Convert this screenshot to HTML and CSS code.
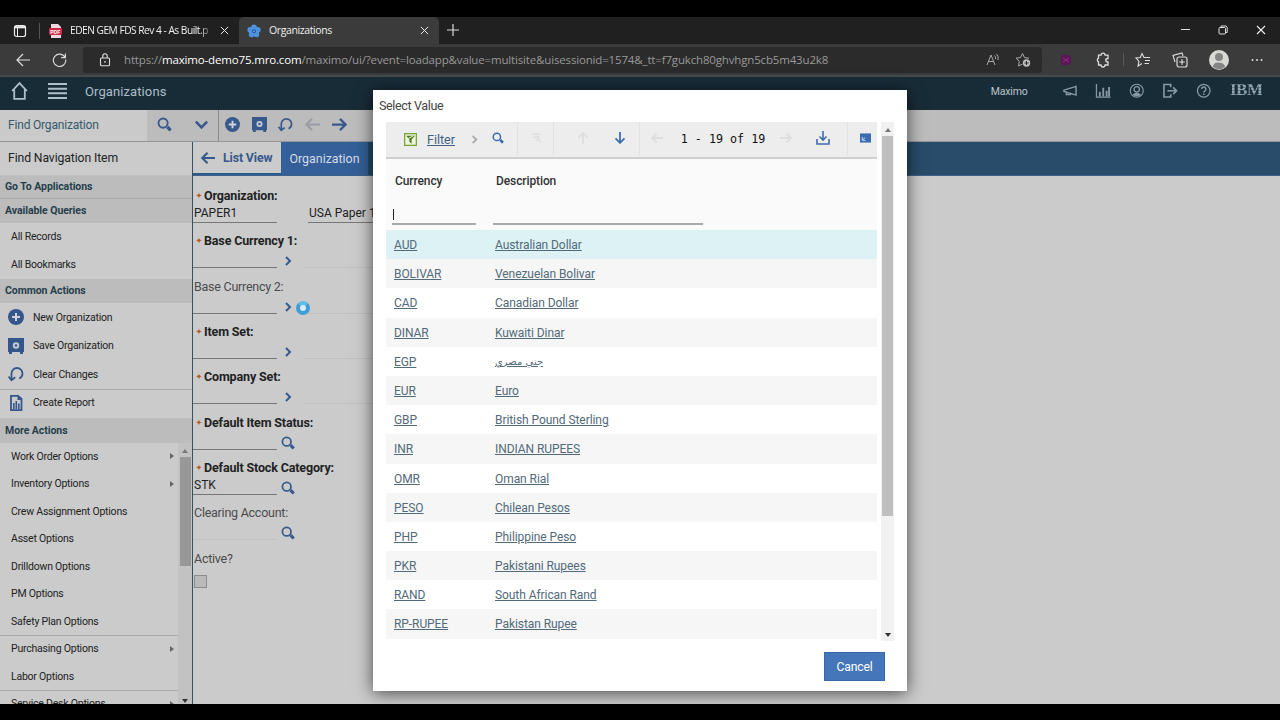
FILE: index.html
```
<!DOCTYPE html>
<html lang="en">
    <head>
        <meta charset="UTF-8">
        <title>Organizations</title>
        <link rel="stylesheet" href="styles.css">
    </head>
    <body>
        <!-- icons -->
        <svg class="sprite">
            <symbol id="search" viewBox="0 0 16 16"><circle cx="6.5" cy="6.5" r="4.9" fill="none" stroke="currentColor" stroke-width="2"/><path d="M11 10.500l3.500 3.800" stroke="currentColor" stroke-width="3.600"/></symbol>
            <symbol id="down" viewBox="0 0 16 16"><path d="M2 5l6 6 6-6" fill="none" stroke="currentColor" stroke-width="2.8"/></symbol>
            <symbol id="chev" viewBox="0 0 10 10"><path d="M3 1l4 4-4 4" fill="none" stroke="currentColor" stroke-width="2"/></symbol>
            <symbol id="plus" viewBox="0 0 16 16"><circle cx="8" cy="8" r="8" fill="currentColor"/><path d="M8 4v8M4 8h8" stroke="#d0d4da" stroke-width="2"/></symbol>
            <symbol id="save" viewBox="0 0 16 16"><path d="M0 0h16v14h-1v2h-3v-2H4v2H1v-2H0z" fill="currentColor"/><circle cx="8" cy="7.5" r="3.2" fill="#c8ccd2"/><circle cx="8" cy="7.5" r="1.3" fill="currentColor"/></symbol>
            <symbol id="undo" viewBox="0 0 16 16"><path d="M3.500 14V7.500a5.500 5.500 0 0 1 11 0c0 2.500-1.200 4-3.200 5M.5 10.500l3 3.800 3.700-3" fill="none" stroke="currentColor" stroke-width="1.800"/></symbol>
            <symbol id="right" viewBox="0 0 16 16"><path d="M0 8h14M8.500 2l6 6-6 6" fill="none" stroke="currentColor" stroke-width="2.400"/></symbol>
            <symbol id="left" viewBox="0 0 16 16"><path d="M16 8H2M7.500 2l-6 6 6 6" fill="none" stroke="currentColor" stroke-width="2.400"/></symbol>
            <symbol id="report" viewBox="0 0 16 16"><path d="M3 .8h7L13.500 4v11.200H3z" fill="none" stroke="currentColor" stroke-width="1.800"/><path d="M9.500 1v4h4" fill="currentColor"/><path d="M5.800 14V8M8.300 14V6M10.800 14V8.500" stroke="currentColor" stroke-width="1.600"/></symbol>
            <symbol id="close" viewBox="0 0 10 10"><path d="M1 1l8 8M9 1L1 9" stroke="currentColor" stroke-width="1.100"/></symbol>
        </svg>
        <div class="screen">
            <!-- browser tabs -->
            <div class="tabs">
                <svg class="panel_icon" viewBox="0 0 14 14"><rect x="1.500" y="1.500" width="11" height="11" rx="2" fill="none" stroke="#eee" stroke-width="1.200"/><path d="M1.500 3.200h11" stroke="#eee" stroke-width="2.200"/><path d="M4.500 3v9.500" stroke="#eee"/></svg>
                <div class="tab tab_pdf">
                    <svg width="13" height="14" viewBox="0 0 13 14"><path d="M2 0h7l3 3v11H2z" fill="#ecdcdf"/><rect y="4" width="13" height="7" rx="1" fill="#d02845"/><text x="1.200" y="9.600" class="pdf">PDF</text></svg>
                    <span class="tab_name fade">EDEN GEM FDS Rev 4 - As Built.p</span>
                    <svg class="x"><use href="#close"/></svg>
                </div>
                <div class="tab active">
                    <svg width="14" height="14" viewBox="0 0 14 14"><g fill="#4d92e0"><circle cx="7" cy="3.200" r="2.800"/><circle cx="10.800" cy="5.900" r="2.800"/><circle cx="9.400" cy="10.400" r="2.800"/><circle cx="4.600" cy="10.400" r="2.800"/><circle cx="3.200" cy="5.900" r="2.800"/></g><circle cx="7" cy="7.200" r="2" fill="#225b9f"/><circle cx="7" cy="7.200" r=".8" fill="#8fc0f4"/></svg>
                    <span class="tab_name">Organizations</span>
                    <svg class="x"><use href="#close"/></svg>
                </div>
                <svg class="new_tab" viewBox="0 0 12 12"><path d="M6 0v12M0 6h12" stroke="#ddd" stroke-width="1.200"/></svg>
                <div class="window_btns">
                    <svg viewBox="0 0 10 10"><path d="M1 4.500h9" stroke="#ddd"/></svg>
                    <svg viewBox="0 0 10 10"><rect x="1" y="2.500" width="6.500" height="6.500" rx="1" fill="none" stroke="#ddd"/><path d="M3 2.500V1h5l1.200 1.200V7.500H8" fill="none" stroke="#ddd"/></svg>
                    <svg><use href="#close"/></svg>
                </div>
            </div>
            <!-- address bar -->
            <div class="address">
                <svg class="back" viewBox="0 0 14 14"><path d="M14 7H1M7 1L1 7l6 6" fill="none" stroke="#ddd" stroke-width="1.200"/></svg>
                <svg class="reload" viewBox="0 0 16 16"><path d="M14 6A6.600 6.600 0 1 0 14.600 8M14.300 1.500V6H9.800" fill="none" stroke="#ddd" stroke-width="1.200"/></svg>
                <div class="url">
                    <svg class="lock" viewBox="0 0 12 14"><rect x="1.500" y="5" width="9" height="7.800" rx="1" fill="none" stroke="#ddd" stroke-width="1.100"/><path d="M3.800 5V3a2.200 2.200 0 0 1 4.400 0v2" fill="none" stroke="#ddd" stroke-width="1.100"/><circle cx="6" cy="8.800" r=".9" fill="#ddd"/></svg>
                    <span class="link">https://<b>maximo-demo75.mro.com</b>/maximo/ui/?event=loadapp&amp;value=multisite&amp;uisessionid=1574&amp;_tt=f7gukch80ghvhgn5cb5m43u2k8</span>
                    <svg class="aloud" viewBox="0 0 14 14"><path d="M1 12L5 2l4 10M2.500 8.500h5M8.500 2.500q1.500 1.500 1 3.500M10.500 1q2.500 2.500 1.500 6" fill="none" stroke="#aaa"/></svg>
                    <svg class="fav" viewBox="0 0 16 16"><path d="M7.500 12L3.500 14l.8-4.700L1 6.200l4.500-.6L7.500 1.500l2 4.100 4.500.6" fill="none" stroke="#aaa"/><circle cx="11.500" cy="11" r="3.700" fill="#bbb"/><path d="M11.500 9v4M9.500 11h4" stroke="#2b2b2b"/></svg>
                </div>
                <div class="ext">
                    <svg viewBox="0 0 16 16"><rect x="3" y="3" width="10" height="10" rx="3" fill="#5b1755"/><path d="M5 6l3 2-3 2M11 6L8 8l3 2" fill="none" stroke="#91288a"/></svg>
                    <svg viewBox="0 0 16 16"><path d="M3.500 3.200H6a2 2 0 0 1 4 0h3v3.300c-3 0-3 3.300 0 3.300V13h-3a2 2 0 0 1-4 0H3.500V9.800a1.800 1.800 0 0 1 0-3.400z" fill="none" stroke="#ddd" stroke-width="1.300"/></svg>
                    <i></i>
                    <svg viewBox="0 0 16 16"><path d="M7 11.500L3 14l1-4.700L1 6l4.300-.5L7 1.500l2 4h6M10 8.500h5M9.500 11.500H14" fill="none" stroke="#ddd" stroke-width="1.100"/></svg>
                    <svg viewBox="0 0 16 16"><path d="M3 10L1 3.500 10 1l1 3" fill="none" stroke="#ddd" stroke-width="1.100"/><rect x="5" y="5" width="10" height="10" rx="2" fill="none" stroke="#ddd" stroke-width="1.200"/><path d="M10 7.200v5.600M7.200 10h5.600" stroke="#ddd" stroke-width="1.200"/></svg>
                    <svg class="avatar" viewBox="0 0 20 20"><circle cx="10" cy="10" r="10" fill="#d8d8d4"/><circle cx="10" cy="7" r="4" fill="#858585"/><path d="M4 17q0-5 6-4.500T16 17q-6 4.500-12 0" fill="#858585"/></svg>
                    <svg viewBox="0 0 16 16"><g fill="#ddd"><circle cx="3.500" cy="8" r="1"/><circle cx="8" cy="8" r="1"/><circle cx="12.500" cy="8" r="1"/></g></svg>
                </div>
            </div>
            <!-- Maximo header -->
            <div class="header">
                <svg class="home" viewBox="0 0 16 17"><path d="M1 8.500L8 1l7 7.500M3 7v9h10V7" fill="none" stroke="#aebfc9" stroke-width="1.700"/></svg>
                <svg class="burger" viewBox="0 0 19 16"><path d="M0 1h19M0 5.700h19M0 10.300h19M0 15h19" stroke="#aebfc9" stroke-width="2"/></svg>
                <span class="app">Organizations</span>
                <span class="user">Maximo</span>
                <div class="header_icons">
                    <svg viewBox="0 0 16 16"><path d="M2 7.300L14.500 3.500v9L2 8.700zM4.500 9.500v2.500h4v-1.500" fill="none" stroke="#8799a3" stroke-width="1.500"/></svg>
                    <svg viewBox="0 0 16 16"><path d="M1.500 1v13.500H16" fill="none" stroke="#8799a3" stroke-width="1.300"/><path d="M5 14V9M8.500 14V5M12 14V8M14.500 14V4" stroke="#8799a3" stroke-width="1.900"/></svg>
                    <svg viewBox="0 0 16 16"><circle cx="8" cy="8" r="6.700" fill="none" stroke="#8799a3" stroke-width="1.200"/><circle cx="8" cy="6.500" r="2.800" fill="none" stroke="#8799a3" stroke-width="1.300"/><path d="M3.500 12q4.500-4 9 0Q8 16 3.500 12" fill="#8799a3"/></svg>
                    <svg viewBox="0 0 16 16"><path d="M9 4.500V1.500H2v13h7v-3M5.500 8H15M11.500 4.500L15 8l-3.500 3.500" fill="none" stroke="#8799a3" stroke-width="1.700"/></svg>
                    <svg viewBox="0 0 16 16"><circle cx="8" cy="8" r="6.500" fill="none" stroke="#8799a3" stroke-width="1.300"/><path d="M5.800 6.300a2.200 2.200 0 1 1 3.200 2q-1 .6-1 1.500M8 10.800v1.600" fill="none" stroke="#8799a3" stroke-width="1.500"/></svg>
                </div>
                <span class="ibm">IBM</span>
            </div>
            <!-- app toolbar -->
            <div class="toolbar">
                <div class="find">Find Organization</div>
                <div class="find_btns"><svg><use href="#search"/></svg><svg><use href="#down"/></svg></div>
                <div class="actions">
                    <svg><use href="#plus"/></svg><svg><use href="#save"/></svg><svg><use href="#undo"/></svg><svg class="off"><use href="#left"/></svg><svg><use href="#right"/></svg>
                </div>
            </div>
            <div class="content">
                <div class="nav">
                    <div class="find_nav">Find Navigation Item</div>
                    <div class="head goto">Go To Applications</div>
                    <div class="head avail">Available Queries</div>
                    <div class="item">All Records</div>
                    <div class="item">All Bookmarks</div>
                    <div class="head common">Common Actions</div>
                    <div class="act"><svg><use href="#plus"/></svg>New Organization</div>
                    <div class="act"><svg><use href="#save"/></svg>Save Organization</div>
                    <div class="act"><svg><use href="#undo"/></svg>Clear Changes</div>
                    <div class="act report"><svg><use href="#report"/></svg>Create Report</div>
                    <div class="head more">More Actions</div>
                    <div class="more_box">
                        <div class="more_list">
                            <div class="item sub">Work Order Options</div>
                            <div class="item sub">Inventory Options</div>
                            <div class="item">Crew Assignment Options</div>
                            <div class="item">Asset Options</div>
                            <div class="item">Drilldown Options</div>
                            <div class="item">PM Options</div>
                            <div class="item">Safety Plan Options</div>
                            <div class="item sub line">Purchasing Options</div>
                            <div class="item">Labor Options</div>
                            <div class="item sub line">Service Desk Options</div>
                        </div>
                        <div class="scroll nav_scroll"><i class="up"></i><div class="thumb"></div><i class="dn"></i></div>
                    </div>
                </div>
                <div class="main">
                    <div class="main_tabs">
                        <div class="list_view"><svg><use href="#left"/></svg>List View</div>
                        <div class="org_tab">Organization</div>
                    </div>
                    <div class="form">
                        <div class="field"><label class="req">Organization:</label><div class="row"><span class="val">PAPER1</span><span class="val desc">USA Paper 1</span></div></div>
                        <div class="field"><label class="req">Base Currency 1:</label><div class="row"><span class="val"></span><svg class="go"><use href="#chev"/></svg><span class="faint"></span></div></div>
                        <div class="field"><label>Base Currency 2:</label><div class="row"><span class="val"></span><svg class="go"><use href="#chev"/></svg><span class="faint"></span><span class="busy"></span></div></div>
                        <div class="field"><label class="req">Item Set:</label><div class="row"><span class="val"></span><svg class="go"><use href="#chev"/></svg><span class="faint"></span></div></div>
                        <div class="field"><label class="req">Company Set:</label><div class="row"><span class="val"></span><svg class="go"><use href="#chev"/></svg><span class="faint"></span></div></div>
                        <div class="field"><label class="req">Default Item Status:</label><div class="row"><span class="val"></span><svg class="look"><use href="#search"/></svg></div></div>
                        <div class="field"><label class="req">Default Stock Category:</label><div class="row"><span class="val">STK</span><svg class="look"><use href="#search"/></svg></div></div>
                        <div class="field"><label>Clearing Account:</label><div class="row"><span class="val none"></span><svg class="look"><use href="#search"/></svg></div></div>
                        <div class="field"><label>Active?</label><div class="check"></div></div>
                    </div>
                </div>
            </div>
            <!-- select value dialog -->
            <div class="dialog">
                <div class="dialog_title">Select Value</div>
                <div class="dialog_body">
                    <div class="table">
                        <div class="table_bar">
                            <svg class="funnel" viewBox="0 0 12 12"><rect x=".6" y=".6" width="10.800" height="10.800" fill="#eef5dc" stroke="#7ba33c" stroke-width="1.200"/><path d="M2 2.500h8L7 6v4L5 8V6z" fill="#4c7a1c"/><path d="M4 5l4-2" stroke="#dbe9bd"/></svg>
                            <a class="filter">Filter</a>
                            <svg class="next"><use href="#chev"/></svg>
                            <div class="c find_c"><svg><use href="#search"/></svg></div>
                            <div class="c sep dim"><svg viewBox="0 0 16 16"><path d="M2 3h11M4 7h7M7 11h4M10 5l4 9" stroke="currentColor" stroke-width="2"/></svg></div>
                            <div class="c sep dim"><svg class="rot_up"><use href="#left"/></svg></div>
                            <div class="c down_c"><svg class="rot_down"><use href="#right"/></svg></div>
                            <div class="c sep dim"><svg><use href="#left"/></svg></div>
                            <div class="count">1 - 19 of 19</div>
                            <div class="c dim"><svg><use href="#right"/></svg></div>
                            <div class="c"><svg class="big" viewBox="0 0 14 14"><path d="M7 0v9M3.500 5.500L7 9l3.500-3.500M1 8v5h12V8" fill="none" stroke="currentColor" stroke-width="1.600"/></svg></div>
                            <div class="c sep last_c"><svg class="win" viewBox="0 0 12 10"><rect width="12" height="10" fill="#3c6cb0"/><path d="M2.500 4v3.500H6M3 7l2.500-2.500" fill="none" stroke="#d5e2f2"/></svg></div>
                        </div>
                        <div class="table_head">
                            <div class="cols names"><span>Currency</span><span>Description</span></div>
                            <div class="cols inputs"><span class="in_cur"><i class="caret"></i></span><span class="in_desc"></span></div>
                        </div>
                        <div class="cols tr picked"><a>AUD</a><a>Australian Dollar</a></div>
                        <div class="cols tr"><a>BOLIVAR</a><a>Venezuelan Bolivar</a></div>
                        <div class="cols tr"><a>CAD</a><a>Canadian Dollar</a></div>
                        <div class="cols tr"><a>DINAR</a><a>Kuwaiti Dinar</a></div>
                        <div class="cols tr"><a>EGP</a><a class="arabic">جني مصري</a></div>
                        <div class="cols tr"><a>EUR</a><a>Euro</a></div>
                        <div class="cols tr"><a>GBP</a><a>British Pound Sterling</a></div>
                        <div class="cols tr"><a>INR</a><a>INDIAN RUPEES</a></div>
                        <div class="cols tr"><a>OMR</a><a>Oman Rial</a></div>
                        <div class="cols tr"><a>PESO</a><a>Chilean Pesos</a></div>
                        <div class="cols tr"><a>PHP</a><a>Philippine Peso</a></div>
                        <div class="cols tr"><a>PKR</a><a>Pakistani Rupees</a></div>
                        <div class="cols tr"><a>RAND</a><a>South African Rand</a></div>
                        <div class="cols tr"><a>RP-RUPEE</a><a>Pakistan Rupee</a></div>
                    </div>
                    <div class="scroll dialog_scroll"><i class="up"></i><div class="thumb"></div><i class="dn"></i></div>
                </div>
                <div class="dialog_foot"><button class="cancel">Cancel</button></div>
            </div>
        </div>
    </body>
</html>
```
FILE: styles.css
```
*{
    box-sizing: border-box;
}
body{
    margin: 0;
    background-color: #000;
    font-family: Roboto, sans-serif;
    font-size: 12px;
    color: #222;
}
svg{
    display: block;
    flex: none;
}
.sprite{
    display: none;
}
.screen{
    position: relative;
    width: 1280px;
    height: 720px;
    padding: 17px 0 16px;
    display: flex;
    flex-direction: column;
    overflow: hidden;
    white-space: nowrap;
}
/* browser */
.tabs{
    height: 27px;
    flex: none;
    display: flex;
    align-items: center;
    background-color: #202020;
    font-family: "Open Sans", sans-serif;
    font-size: 10.5px;
    letter-spacing: -0.4px;
    color: #eee;
}
.panel_icon{
    width: 14px;
    height: 14px;
    margin: 0 12px 0 13px;
}
.tab{
    height: 27px;
    display: flex;
    align-items: center;
}
.tab_pdf{
    width: 200px;
    height: 16px;
    padding-left: 9px;
    border-left: 1px solid #555;
}
.pdf{
    font: bold 5px "Liberation Sans", sans-serif;
    letter-spacing: 0;
    fill: #fff;
}
.tab_name{
    margin-left: 8px;
    flex: 1;
    overflow: hidden;
    padding-bottom: 1px;
}
.fade{
    -webkit-mask-image: linear-gradient(90deg, #000 90%, transparent);
    mask-image: linear-gradient(90deg, #000 90%, transparent);
    margin-right: 6px;
    font-size: 10.2px;
    letter-spacing: -0.5px;
}
.x{
    width: 9px;
    height: 9px;
    margin-right: 10px;
}
.active{
    width: 200px;
    padding-left: 8px;
    background-color: #3b3b3b;
    border-radius: 5px 5px 0 0;
}
.new_tab{
    width: 12px;
    height: 12px;
    margin: 0 0 1px 8px;
}
.window_btns{
    margin: 0 14px 1px auto;
    display: flex;
    gap: 28px;
}
.window_btns svg{
    width: 10px;
    height: 10px;
}
.address{
    height: 33px;
    flex: none;
    display: flex;
    align-items: center;
    background-color: #3b3b3b;
    border-bottom: 2px solid #454a4d;
    color: #ddd;
}
.back{
    width: 14px;
    height: 14px;
    margin-left: 16px;
}
.reload{
    width: 15px;
    height: 15px;
    margin: 0 16px 0 22px;
}
.url{
    width: 959px;
    height: 26px;
    padding-left: 16px;
    display: flex;
    align-items: center;
    background-color: #2b2b2b;
    border-radius: 3px;
    font-family: "Open Sans", sans-serif;
    font-size: 11.5px;
    letter-spacing: -0.16px;
    color: #999;
}
.url b{
    font-weight: normal;
    color: #fff;
}
.lock{
    width: 12px;
    height: 14px;
    margin-right: 13px;
}
.aloud{
    width: 14px;
    height: 14px;
    margin-left: auto;
}
.fav{
    width: 16px;
    height: 16px;
    margin: 0 11px 0 15px;
}
.ext{
    flex: 1;
    display: flex;
    align-items: center;
    padding-left: 16px;
}
.ext svg{
    width: 16px;
    height: 16px;
    margin-right: 21px;
}
.ext i{
    width: 1px;
    height: 13px;
    margin: 0 11px 0 -9px;
    background-color: #5a5a5a;
}
.ext .avatar{
    width: 20px;
    height: 20px;
    margin-right: 20px;
}
.ext svg:last-child{
    margin-right: 0;
}
/* app header */
.header{
    height: 33px;
    flex: none;
    display: flex;
    align-items: center;
    padding-bottom: 5px;
    background-color: #182c38;
    color: #aebfc9;
}
.home{
    width: 17px;
    height: 18px;
    margin: 0 20px 0 11px;
}
.burger{
    width: 19px;
    height: 16px;
    margin-right: 18px;
}
.app{
    font-size: 13px;
    letter-spacing: 0.1px;
}
.user{
    margin-left: auto;
    margin-right: 34px;
    font-size: 10.5px;
    letter-spacing: -0.2px;
    color: #bcc6cc;
}
.header_icons{
    display: flex;
    gap: 18px;
}
.header_icons svg{
    width: 15.5px;
    height: 15.5px;
}
.ibm{
    width: 32px;
    margin: 0 18px 3px 19px;
    font: bold 17px/15px "Liberation Serif", serif;
    letter-spacing: -0.5px;
    color: transparent;
    background: repeating-linear-gradient(#93a5af 0 2px, #6c7f8a 2px 3px);
    -webkit-background-clip: text;
    background-clip: text;
}
/* app toolbar */
.toolbar{
    height: 32px;
    flex: none;
    display: flex;
    background-color: #bcbcbc;
    border-bottom: 1px solid #929699;
    color: #38598c;
}
.find{
    width: 147px;
    padding-left: 8px;
    line-height: 30px;
    background-color: #cacaca;
    font-size: 12px;
    letter-spacing: -0.18px;
    color: #35586b;
}
.find_btns{
    width: 72px;
    display: flex;
    align-items: center;
    gap: 22px;
    padding: 0 0 2px 10px;
    border-right: 1px solid #898d91;
}
.find_btns svg{
    width: 15px;
    height: 15px;
}
.actions{
    display: flex;
    align-items: center;
    gap: 11.7px;
    padding: 0 0 3px 6px;
}
.actions svg{
    width: 15px;
    height: 15px;
}
.off{
    color: #9b9fa4;
}
.content{
    flex: 1;
    display: flex;
    min-height: 0;
    background-color: #cbcbcb;
}
/* left navigation */
.nav{
    width: 193px;
    flex: none;
    display: flex;
    flex-direction: column;
    border-right: 1px solid #35505f;
    font-size: 10.5px;
    letter-spacing: -0.22px;
}
.find_nav{
    height: 34px;
    padding-left: 8px;
    line-height: 32px;
    font-size: 12.2px;
    letter-spacing: -0.1px;
    border-bottom: 1px solid #c0c0c0;
}
.head{
    padding-left: 5px;
    background-color: #bcbcbc;
    font-weight: bold;
    letter-spacing: -0.06px;
    color: #263f4b;
}
.goto{
    height: 23px;
    line-height: 22px;
    border-bottom: 1px solid #a9a9a9;
}
.avail{
    height: 24px;
    line-height: 23px;
}
.common{
    height: 24px;
    margin-top: 1px;
    line-height: 24px;
}
.more{
    height: 25px;
    line-height: 25px;
}
.item{
    height: 27.5px;
    padding-left: 11px;
    line-height: 27.5px;
}
.act{
    height: 28.5px;
    display: flex;
    align-items: center;
    padding-left: 8px;
    gap: 9px;
}
.act svg{
    width: 16px;
    height: 16px;
    color: #35568a;
}
.report{
    height: 29px;
    padding-bottom: 2px;
    border-top: 1px solid #aaa;
}
.more_box{
    flex: 1;
    display: flex;
    min-height: 0;
    overflow: hidden;
}
.more_list{
    flex: 1;
}
.line{
    border-top: 1px solid #aaa;
    line-height: 26px;
}
.sub{
    display: flex;
    justify-content: space-between;
    align-items: center;
    padding-right: 4px;
}
.sub::after{
    content: "";
    border-left: 4px solid #666;
    border-top: 3px solid transparent;
    border-bottom: 3px solid transparent;
}
.scroll{
    display: flex;
    flex-direction: column;
    align-items: center;
}
.scroll i{
    border-left: 3px solid transparent;
    border-right: 3px solid transparent;
}
.up{
    border-bottom: 4px solid #777;
}
.dn{
    margin-top: auto;
    border-top: 4px solid #333;
}
.nav_scroll{
    width: 14px;
    padding: 6px 0 1px;
    background-color: #c2c2c2;
}
.nav_scroll .thumb{
    width: 11px;
    height: 109px;
    margin-top: 4px;
    background-color: #989898;
}
/* form */
.main{
    flex: 1;
    min-width: 0;
}
.main_tabs{
    height: 34px;
    display: flex;
    background-color: #284c69;
    border-bottom: 1px solid #3c628c;
    font-size: 12.4px;
}
.list_view{
    width: 88px;
    display: flex;
    align-items: center;
    gap: 8px;
    padding-left: 8px;
    background-color: #cbcbcb;
    border-bottom: 2px solid #2d5b87;
    font-weight: bold;
    letter-spacing: -0.15px;
    color: #38598c;
}
.list_view svg{
    width: 14px;
    height: 14px;
}
.org_tab{
    width: 87px;
    text-align: center;
    line-height: 33px;
    background-color: #345f98;
    color: #d5dce6;
}
.form{
    padding-top: 12px;
}
.field{
    height: 45.35px;
}
label{
    display: block;
    height: 16px;
    padding-left: 1px;
    line-height: 16px;
    font-size: 12.5px;
    letter-spacing: -0.25px;
    color: #4b4b4b;
}
.req{
    padding-left: 3px;
    font-weight: bold;
    letter-spacing: -0.15px;
    color: #222;
}
.req::before{
    content: "✦";
    display: inline-block;
    width: 8px;
    font-size: 7px;
    vertical-align: 2px;
    color: #b3561f;
}
.row{
    display: flex;
    height: 19px;
}
.val{
    width: 84px;
    padding-left: 1px;
    line-height: 18px;
    border-bottom: 1px solid #777;
}
.none{
    border-color: #bfbfbf;
}
.desc{
    width: 80px;
    margin-left: 31px;
}
.go{
    width: 10px;
    height: 10px;
    margin: 7px 10px 0 6px;
    color: #38598c;
}
.look{
    width: 14px;
    height: 14px;
    margin: 5px 0 0 4px;
    color: #38598c;
}
.faint{
    width: 80px;
    border-bottom: 1px solid #bfbfbf;
}
.busy{
    width: 14px;
    height: 14px;
    margin: 6px 0 0 -87px;
    border: 4px solid #3d9fd6;
    border-top-color: #62bde6;
    border-radius: 50%;
    background-color: #dcebf5;
}
.check{
    width: 13px;
    height: 13px;
    margin: 8px 0 0 1px;
    border: 1px solid #8b8b8b;
    background-color: #bababa;
}
/* dialog */
.dialog{
    position: absolute;
    left: 373px;
    top: 90px;
    width: 534px;
    height: 601px;
    background-color: #fff;
    box-shadow: 0 2px 16px rgba(0,0,0,0.65);
}
.dialog_title{
    height: 32px;
    padding-left: 6px;
    line-height: 32px;
    font-size: 12.5px;
    letter-spacing: -0.35px;
    color: #444;
}
.dialog_body{
    display: flex;
    gap: 4px;
    height: 519px;
    padding-left: 13px;
}
.table{
    width: 491px;
}
.table_bar{
    height: 37px;
    display: grid;
    grid-template-columns: 13px 47px 20px 33px 36px 58px 28px 34px 100px 26px 48px 30px;
    align-items: center;
    padding: 0 0 3px 18px;
    background-color: #ededed;
    border-bottom: 2px solid #cfcfcf;
    color: #3c6cb0;
}
.funnel{
    width: 13px;
    height: 13px;
}
.filter{
    padding-left: 10px;
    text-decoration: underline;
    font-size: 12.5px;
    color: #426183;
}
.next{
    width: 9px;
    height: 9px;
    justify-self: center;
    color: #aaa;
}
.c{
    height: 34px;
    display: flex;
    align-items: center;
    justify-content: center;
    padding-bottom: 2px;
}
.c svg{
    width: 12px;
    height: 12px;
}
.c .big{
    width: 14px;
    height: 14px;
}
.c .win{
    width: 11px;
    height: 10px;
}
.sep{
    border-left: 1px solid #e2e2e2;
}
.find_c{
    padding-right: 5px;
}
.dim{
    color: #dedede;
}
.down_c{
    padding-right: 10px;
}
.last_c{
    padding-left: 6px;
}
.rot_up, .rot_down{
    transform: rotate(90deg);
}
.count{
    text-align: center;
    font-family: "DejaVu Sans Mono", monospace;
    font-size: 11.7px;
    color: #111;
}
.table_head{
    height: 71px;
    padding-top: 11px;
    background-color: #fafafa;
}
.cols{
    display: grid;
    grid-template-columns: 101px 1fr;
    padding-left: 8px;
}
.names{
    padding-left: 9px;
    line-height: 22px;
    font-weight: 500;
    letter-spacing: -0.1px;
    color: #333;
}
.inputs{
    height: 33px;
    padding-left: 6px;
}
.inputs span{
    border-bottom: 2px solid #a9a9a9;
}
.in_cur{
    width: 84px;
    padding: 17px 0 0 1px;
}
.in_desc{
    width: 210px;
}
.caret{
    display: block;
    width: 1px;
    height: 11px;
    background-color: #222;
}
.tr{
    height: 29.2px;
    line-height: 30px;
    letter-spacing: -0.07px;
    color: #526a7a;
}
.tr a{
    text-decoration: underline;
}
.tr:nth-child(even){
    background-color: #f6f6f6;
}
.tr.picked{
    background-color: #ddf2f4;
}
.arabic{
    font-family: "DejaVu Sans", sans-serif;
    font-size: 10px;
}
.dialog_scroll{
    width: 13px;
    padding: 6px 0 4px;
    background-color: #f1f1f1;
}
.dialog_scroll .thumb{
    width: 11px;
    height: 380px;
    margin-top: 4px;
    background-color: #bfbfbf;
}
.dialog_foot{
    display: flex;
    justify-content: flex-end;
    padding: 11px 22px 0 0;
}
.cancel{
    width: 61px;
    height: 29px;
    padding: 0;
    border: 1px solid #3a67a6;
    background-color: #4476b9;
    font-family: Roboto, sans-serif;
    font-size: 12.2px;
    letter-spacing: -0.2px;
    color: #fff;
}
```
